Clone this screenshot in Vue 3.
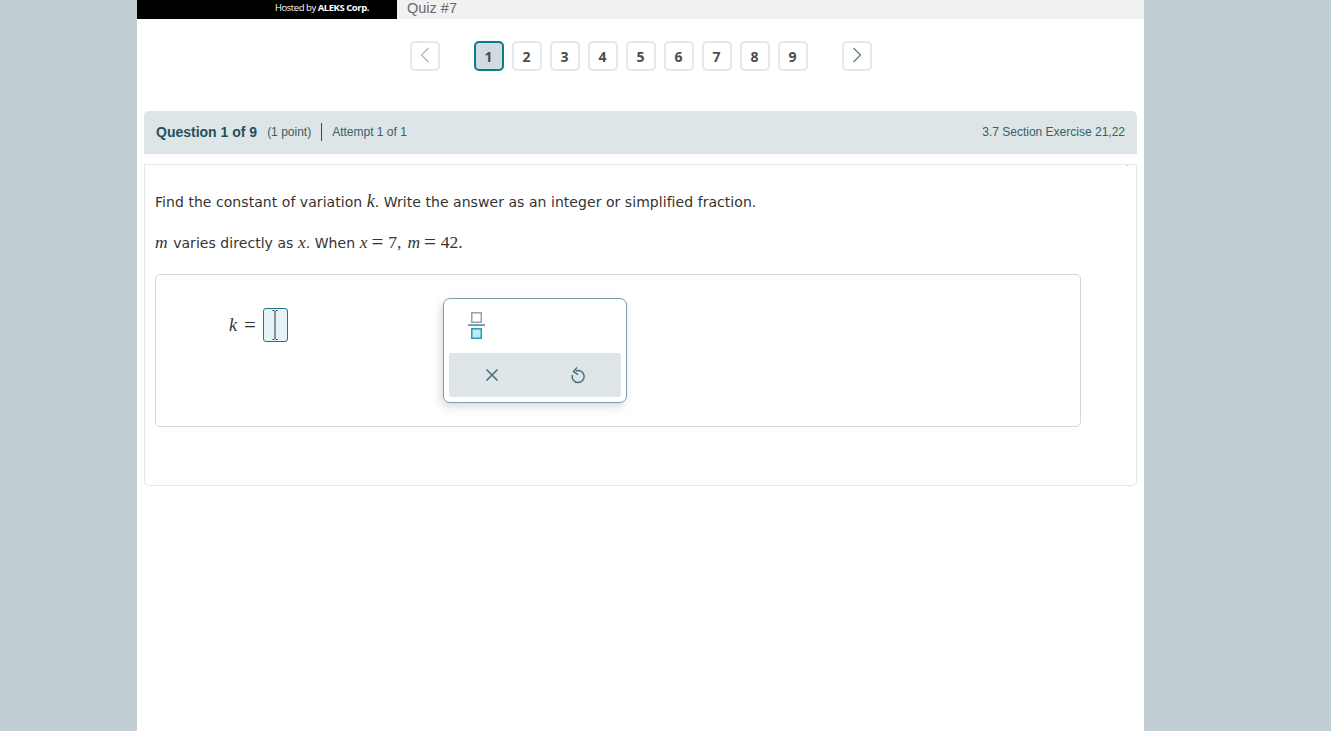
<script setup>
const pages = [1, 2, 3, 4, 5, 6, 7, 8, 9]
</script>

<template>
  <div class="page">
    <main class="column">
      <header class="topbar">
        <div class="host">Hosted by <b>ALEKS Corp.</b></div>
        <div class="title">Quiz #7</div>
      </header>

      <nav class="pager">
        <button class="pg arrow prev">
          <svg width="12" height="18" viewBox="0 0 12 18"><path d="M9.5 2 L2.5 9 L9.5 16" fill="none" stroke="#9fb4bb" stroke-width="1.1" /></svg>
        </button>
        <div class="nums">
          <button v-for="p in pages" :key="p" class="pg" :class="{ active: p === 1 }">{{ p }}</button>
        </div>
        <button class="pg arrow next">
          <svg width="12" height="18" viewBox="0 0 12 18"><path d="M2.5 2 L9.5 9 L2.5 16" fill="none" stroke="#55757f" stroke-width="1.1" /></svg>
        </button>
      </nav>

      <section class="qbar">
        <div class="qleft">
          <strong>Question 1 of 9</strong>
          <span class="pts">(1 point)</span>
          <span class="attempt">Attempt 1 of 1</span>
        </div>
        <div class="qright">3.7 Section Exercise 21,22</div>
      </section>

      <section class="card">
        <p class="line one">Find the constant of variation <i class="m k">k</i>. Write the answer as an integer or simplified fraction.</p>
        <p class="line two"><i class="m lead">m</i> varies directly as <i class="m">x</i>. When <i class="m">x</i><span class="m rel">=</span><span class="m">7,</span><i class="m after">m</i><span class="m rel">=</span><span class="m">42.</span></p>

        <div class="answer">
          <div class="eq">
            <i class="m keq">k</i><span class="m eqs">=</span>
            <div class="input">
              <svg width="8" height="32" viewBox="0 0 8 32"><path d="M1.5 1.5 H3 L4 2.5 L5 1.5 H6.5 M4 2.5 V29.5 M1.5 30.5 H3 L4 29.5 L5 30.5 H6.5" fill="none" stroke="#333" stroke-width="1" /></svg>
            </div>
          </div>

          <div class="popup">
            <div class="tools">
              <svg width="18" height="28" viewBox="0 0 18 28">
                <rect x="3.75" y="0.75" width="9.5" height="9.5" fill="#fff" stroke="#8ea5ad" stroke-width="1.5" />
                <rect x="0" y="12.3" width="17" height="1.5" fill="#5d7c86" />
                <rect x="3.75" y="16.75" width="9.5" height="9.5" fill="#bfe9ee" stroke="#19a3bb" stroke-width="1.5" />
              </svg>
            </div>
            <div class="actions">
              <button class="act">
                <svg width="16" height="16" viewBox="0 0 16 16"><path d="M2.5 2.5 L13.5 13.5 M13.5 2.5 L2.5 13.5" fill="none" stroke="#4b6f7b" stroke-width="1.6" /></svg>
              </button>
              <button class="act">
                <svg width="16" height="18" viewBox="0 0 16 18"><path d="M6 5 A6 6 0 1 1 2.4 9 M7 1.6 L3.6 5.6 L8 8.6" fill="none" stroke="#4b6f7b" stroke-width="1.5" /></svg>
              </button>
            </div>
          </div>
        </div>
      </section>
    </main>
  </div>
</template>

<style>
html, body { margin: 0; background: #c1ced4; }
</style>

<style scoped>
.page { height: 731px; overflow: hidden; padding-left: 137px; }
.column { width: 1007px; height: 731px; background: #fff; display: flex; flex-direction: column; align-items: center; }
.topbar { display: flex; width: 100%; height: 19px; background: #f1f1f1; flex: none; }
.host { width: 232px; padding-right: 28px; background: #000; color: #fff; font: 9.5px/15px "Open Sans", sans-serif; letter-spacing: -0.45px; text-align: right; }
.host b { font-weight: 700; }
.title { padding-left: 10px; color: #6a6a6a; font: 14.5px/17px "Liberation Sans", sans-serif; }
.pager { display: flex; align-items: center; margin-top: 22px; height: 30px; flex: none; }
.pg { box-sizing: border-box; width: 30px; height: 30px; padding: 2px 0 0; border: 2px solid #e2e9ea; border-radius: 5px; background: #fff; color: #4c4c4c; font: 700 14px/26px "Open Sans", sans-serif; display: flex; align-items: center; justify-content: center; }
.pg.active { background: #d3dbde; border-color: #0c7a8a; color: #4c4c4c; }
.nums { display: flex; gap: 8px; margin: 0 34px; }
.arrow { padding: 0; }
.arrow svg { display: block; margin-top: -2px; }
.qbar { box-sizing: border-box; width: 993px; height: 43px; margin-top: 40px; flex: none; background: #dee5e7; border-radius: 5px 5px 0 0; display: flex; align-items: center; justify-content: space-between; padding: 0 12px 2px; font: 12px "Liberation Sans", sans-serif; color: #36606c; }
.qleft { display: flex; align-items: center; }
.qleft strong { font-size: 14px; font-weight: 700; color: #23505e; }
.pts { margin-left: 10px; }
.attempt { margin-left: 10px; padding-left: 10px; border-left: 1px solid #23505e; line-height: 18px; }
.qright { color: #36606c; }
.card { position: relative; box-sizing: border-box; width: 993px; height: 322px; margin-top: 10px; flex: none; border: 1px solid #e2e9ea; border-radius: 0 0 5px 5px; padding: 0 10px; font: 14px "DejaVu Sans", Verdana, sans-serif; letter-spacing: 0.05px; color: #333; }
.card::after { content: ""; position: absolute; top: 0; right: 8px; width: 2px; height: 1px; background: #ccd8dc; }
.line { margin: 0; height: 20px; line-height: 20px; white-space: nowrap; }
.one { margin-top: 26px; }
.two { margin-top: 21px; }
.m { font-family: "Liberation Serif", serif; font-size: 17.5px; letter-spacing: 0; }
.k { font-size: 18px; }
.lead { margin-right: 1px; }
.rel { font-size: 21px; margin: 0 5px 0 4px; vertical-align: -1px; }
.after { margin-left: 6px; }
.answer { box-sizing: border-box; width: 926px; height: 153px; margin-top: 22px; border: 1px solid #d0dade; border-radius: 5px; display: flex; align-items: flex-start; padding-left: 72px; }
.eq { display: flex; align-items: center; width: 215px; margin-top: 33px; color: #333; }
.keq { font-size: 18px; margin-left: 1px; }
.eqs { margin-left: 7px; font-size: 21px; }
.input { box-sizing: border-box; width: 25px; height: 34px; margin-left: 7px; background: #e5f3f7; border: 1px solid #1a7a8a; border-radius: 3px; display: flex; align-items: center; justify-content: center; }
.popup { box-sizing: border-box; width: 184px; height: 105px; margin-top: 23px; background: #fff; border: 1px solid #7f9da7; border-radius: 7px; box-shadow: -2px 4px 8px rgba(90, 120, 130, .25); padding: 0 5px 5px; display: flex; flex-direction: column; }
.tools { height: 54px; flex: none; padding: 13px 0 0 19px; box-sizing: border-box; }
.tools svg { display: block; }
.actions { height: 44px; background: #dee5e7; border-radius: 3px; display: flex; }
.act { flex: 1; background: none; border: 0; padding: 0; display: flex; align-items: center; justify-content: center; }
</style>
